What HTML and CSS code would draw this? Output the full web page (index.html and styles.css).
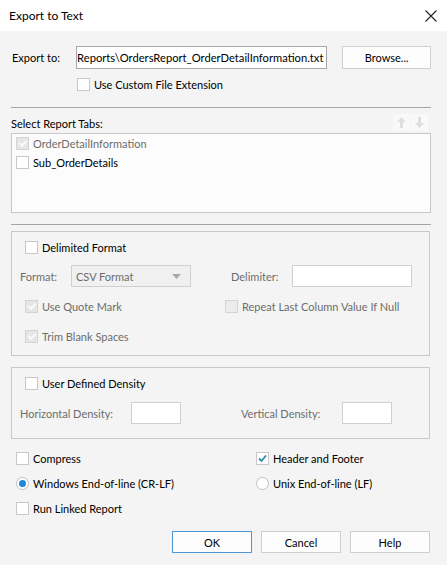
FILE: index.html
```html
<!DOCTYPE html>
<html lang="en">
<head>
  <meta charset="UTF-8">
  <meta name="viewport" content="width=device-width, initial-scale=1.0">
  <title>Export to Text</title>
  <link rel="stylesheet" href="styles.css">
</head>
<body>
  <div class="dialog">
    <div class="titlebar">
      <span>Export to Text</span>
      <svg class="close" width="12" height="12" viewBox="0 0 12 12">
        <path d="M0.5 0.5 L11.5 11.5 M11.5 0.5 L0.5 11.5" stroke="#222" stroke-width="1.1" fill="none"/>
      </svg>
    </div>

    <div class="content">
      <div class="export-row">
        <span class="export-lbl">Export to:</span>
        <div class="path-box"><span>Reports\OrdersReport_OrderDetailInformation.txt</span></div>
        <button class="btn browse">Browse...</button>
      </div>
      <div class="check ext-check"><span class="box"></span>Use Custom File Extension</div>

      <div class="sep"></div>

      <div class="tabs-head">
        <span>Select Report Tabs:</span>
        <div class="arrows">
          <span class="arrow-btn">
            <svg width="11" height="13" viewBox="0 0 11 13"><path d="M5.5 1 L10 6 H7 V12 H4 V6 H1 Z" fill="#dedede"/></svg>
          </span>
          <span class="arrow-btn">
            <svg width="11" height="13" viewBox="0 0 11 13"><path d="M5.5 12 L10 7 H7 V1 H4 V7 H1 Z" fill="#dedede"/></svg>
          </span>
        </div>
      </div>
      <div class="tab-list">
        <div class="check disabled"><span class="box grey-checked"></span>OrderDetailInformation</div>
        <div class="check"><span class="box"></span>Sub_OrderDetails</div>
      </div>

      <div class="sep sep2"></div>

      <div class="group delim-group">
        <div class="check"><span class="box"></span>Delimited Format</div>
        <div class="field-row">
          <span class="field-lbl fmt-lbl">Format:</span>
          <div class="combo">
            <span>CSV Format</span>
            <svg width="9" height="5" viewBox="0 0 9 5"><path d="M0 0 H9 L4.5 5 Z" fill="#a8a8a8"/></svg>
          </div>
          <span class="field-lbl delim-lbl">Delimiter:</span>
          <div class="text-box delim-box"></div>
        </div>
        <div class="opt-row quote-row">
          <div class="check disabled left-col"><span class="box grey-checked"></span>Use Quote Mark</div>
          <div class="check disabled"><span class="box grey"></span>Repeat Last Column Value If Null</div>
        </div>
        <div class="opt-row trim-row">
          <div class="check disabled"><span class="box grey-checked"></span>Trim Blank Spaces</div>
        </div>
      </div>

      <div class="group density-group">
        <div class="check"><span class="box"></span>User Defined Density</div>
        <div class="field-row density-row">
          <span class="field-lbl hd-lbl">Horizontal Density:</span>
          <div class="text-box small-box"></div>
          <span class="field-lbl vd-lbl">Vertical Density:</span>
          <div class="text-box small-box"></div>
        </div>
      </div>

      <div class="options">
        <div class="opt-line">
          <div class="check opt-left"><span class="box"></span>Compress</div>
          <div class="check"><span class="box checked">
            <svg width="11" height="11" viewBox="0 0 11 11"><path d="M2 5.5 L4.5 8 L9 2.5" stroke="#2a8bb0" stroke-width="1.8" fill="none"/></svg>
          </span>Header and Footer</div>
        </div>
        <div class="opt-line">
          <div class="check opt-left"><span class="radio on"></span>Windows End-of-line (CR-LF)</div>
          <div class="check"><span class="radio"></span>Unix End-of-line (LF)</div>
        </div>
        <div class="opt-line">
          <div class="check opt-left"><span class="box"></span>Run Linked Report</div>
        </div>
      </div>

      <div class="buttons">
        <button class="btn default">OK</button>
        <button class="btn">Cancel</button>
        <button class="btn">Help</button>
      </div>
    </div>
  </div>
</body>
</html>
```

FILE: styles.css
```css
body {
  margin: 0;
  font-family: Lato, "Noto Sans", sans-serif;
  font-size: 11px;
  color: #000;
  background: #f3f4f3;
}
.dialog {
  width: 447px;
  height: 565px;
  background: #f3f4f3;
}
.titlebar {
  height: 31px;
  background: #fff;
  display: flex;
  align-items: center;
  justify-content: space-between;
  padding: 0 10px 0 9px;
  font-size: 12px;
}
.content {
  padding: 15px 16px 0 11px;
}
.export-row {
  display: flex;
  align-items: center;
  height: 23px;
}
.export-lbl {
  width: 64px;
  padding-left: 1px;
}
.path-box {
  width: 248px;
  height: 21px;
  border: 1px solid #a8a8a8;
  background: #fff;
  overflow: hidden;
  display: flex;
  justify-content: flex-end;
  align-items: center;
  white-space: nowrap;
  padding-right: 3px;
  font-size: 11.2px;
}
.btn {
  font: inherit;
  color: #000;
  background: #fdfdfd;
  border: 1px solid #d0d0d0;
  height: 22px;
  width: 80px;
  padding: 0;
}
.browse {
  margin-left: 15px;
  width: 89px;
  height: 23px;
}
.check {
  display: flex;
  align-items: center;
  height: 18px;
  white-space: nowrap;
}
.box {
  width: 11px;
  height: 11px;
  border: 1px solid #c8c8c8;
  background: #fff;
  margin-right: 4px;
  display: flex;
  align-items: center;
  justify-content: center;
  flex-shrink: 0;
}
.box.grey {
  background: #ececec;
  border-color: #d4d4d4;
}
.box.grey-checked {
  background: #e6e6e6;
  border-color: #d4d4d4;
}
.box.grey-checked::after {
  content: "";
  width: 6px;
  height: 3px;
  border-left: 2px solid #fafafa;
  border-bottom: 2px solid #fafafa;
  transform: rotate(-45deg);
  margin-top: -2px;
}
.disabled {
  color: #6d6d6d;
}
.ext-check {
  margin-top: 6px;
  padding-left: 66px;
}
.sep {
  height: 1px;
  background: #a4a4a4;
  margin-top: 14px;
}
.sep2 {
  margin-top: 11px;
}
.tabs-head {
  margin-top: 6px;
  height: 19px;
  display: flex;
  align-items: center;
  justify-content: space-between;
}
.arrows {
  display: flex;
  gap: 1px;
  margin-top: -3px;
  margin-right: 3px;
}
.arrow-btn {
  width: 17px;
  height: 17px;
  background: #f8f9f8;
  display: flex;
  align-items: center;
  justify-content: center;
}
.tab-list {
  border: 1px solid #c8c8c8;
  background: #fbfcfb;
  padding: 0 0 0 4px;
  height: 78px;
}
.tab-list .check {
  height: 19px;
}
.group {
  border: 1px solid #c8c8c8;
  margin-right: 1px;
}
.delim-group {
  margin-top: 6px;
  padding: 6px 0 10px 8px;
}
.delim-group > .check,
.density-group > .check {
  margin-left: 5px;
}
.field-row {
  display: flex;
  align-items: center;
  height: 22px;
  margin-top: 9px;
  color: #6d6d6d;
}
.field-lbl {
  flex-shrink: 0;
}
.fmt-lbl {
  width: 51px;
}
.combo {
  width: 105px;
  height: 20px;
  border: 1px solid #d0d0d0;
  background: #f0f0f0;
  display: flex;
  align-items: center;
  justify-content: space-between;
  padding: 0 9px 0 4px;
}
.delim-lbl {
  margin-left: 40px;
  width: 61px;
}
.text-box {
  height: 20px;
  border: 1px solid #d0d0d0;
  background: #fff;
}
.delim-box {
  width: 118px;
}
.opt-row {
  display: flex;
  margin-left: 5px;
}
.quote-row {
  margin-top: 10px;
}
.trim-row {
  margin-top: 12px;
}
.left-col {
  width: 200px;
}
.density-group {
  margin-top: 11px;
  padding: 6px 0 14px 8px;
}
.density-row {
  margin-top: 10px;
}
.hd-lbl {
  width: 111px;
}
.small-box {
  width: 48px;
}
.vd-lbl {
  margin-left: 60px;
  width: 101px;
}
.options {
  margin-top: 10px;
}
.opt-line {
  display: flex;
  margin-left: 5px;
}
.opt-line + .opt-line {
  margin-top: 7px;
}
.opt-left {
  width: 240px;
}
.radio {
  width: 11px;
  height: 11px;
  border: 1px solid #c0c0c0;
  border-radius: 50%;
  background: #fff;
  margin-right: 4px;
  display: flex;
  align-items: center;
  justify-content: center;
}
.radio.on::after {
  content: "";
  width: 7px;
  height: 7px;
  border-radius: 50%;
  background: #1e88d8;
}
.buttons {
  display: flex;
  justify-content: flex-end;
  gap: 9px;
  margin-top: 14px;
  margin-right: 1px;
}
.btn.default {
  border-color: #4a96d6;
}
```
